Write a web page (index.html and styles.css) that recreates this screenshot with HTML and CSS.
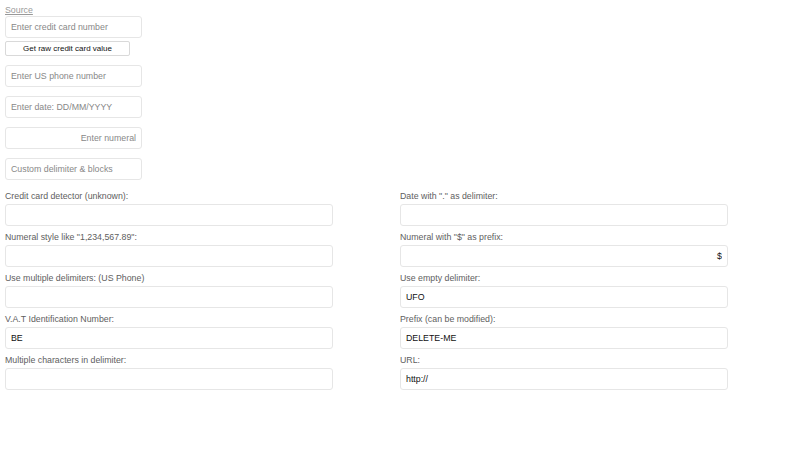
FILE: index.html
```html
<!DOCTYPE html>
<html>
<head>
<meta charset="utf-8">
<link rel="stylesheet" href="styles.css">
</head>
<body>
<a class="source" href="#">Source</a>
<div class="stack">
  <input class="field small" type="text" placeholder="Enter credit card number">
  <button class="btn" type="button">Get raw credit card value</button>
  <input class="field small gap" type="text" placeholder="Enter US phone number">
  <input class="field small gap" type="text" placeholder="Enter date: DD/MM/YYYY">
  <input class="field small gap right" type="text" placeholder="Enter numeral">
  <input class="field small gap" type="text" placeholder="Custom delimiter &amp; blocks">
</div>
<div class="grid">
  <div class="cell"><label>Credit card detector (unknown):</label><input class="field wide" type="text"></div>
  <div class="cell"><label>Date with "." as delimiter:</label><input class="field wide" type="text"></div>
  <div class="cell"><label>Numeral style like "1,234,567.89":</label><input class="field wide" type="text"></div>
  <div class="cell"><label>Numeral with "$" as prefix:</label><input class="field wide right" type="text" value="$"></div>
  <div class="cell"><label>Use multiple delimiters: (US Phone)</label><input class="field wide" type="text"></div>
  <div class="cell"><label>Use empty delimiter:</label><input class="field wide" type="text" value="UFO"></div>
  <div class="cell"><label>V.A.T Identification Number:</label><input class="field wide" type="text" value="BE"></div>
  <div class="cell"><label>Prefix (can be modified):</label><input class="field wide" type="text" value="DELETE-ME"></div>
  <div class="cell"><label>Multiple characters in delimiter:</label><input class="field wide" type="text"></div>
  <div class="cell"><label>URL:</label><input class="field wide" type="text" value="http://"></div>
</div>
</body>
</html>
```
FILE: styles.css
```css
html, body {
  margin: 0;
  background: #fff;
}
body {
  padding: 5px;
  font-family: "Liberation Sans", Arial, sans-serif;
  font-size: 8.8px;
  color: #333;
}
.source {
  display: block;
  height: 11px;
  line-height: 11px;
  font-size: 8.8px;
  color: #999;
  text-decoration: underline;
}
.stack {
  display: flex;
  flex-direction: column;
  align-items: flex-start;
}
.field {
  box-sizing: border-box;
  height: 22px;
  border: 1px solid #e6e6e6;
  border-radius: 3px;
  padding: 0 5px;
  font-family: "Liberation Sans", Arial, sans-serif;
  font-size: 8.8px;
  color: #111;
  background: #fff;
  outline: none;
  margin: 0;
}
.field::placeholder {
  color: #888;
}
.small {
  width: 137px;
}
.gap {
  margin-top: 9px;
}
.right {
  text-align: right;
}
.btn {
  margin-top: 3px;
  width: 125px;
  height: 15px;
  padding: 0;
  box-sizing: border-box;
  border: 1px solid #d9d9d9;
  border-radius: 2px;
  background: #fff;
  font-family: "Liberation Sans", Arial, sans-serif;
  font-size: 8px;
  line-height: 13px;
  color: #111;
  margin-bottom: 0;
}
.grid {
  display: grid;
  grid-template-columns: 395px 395px;
  margin-top: 10px;
}
.cell {
  display: flex;
  flex-direction: column;
  align-items: flex-start;
  padding-bottom: 5px;
}
.cell label {
  display: block;
  height: 13px;
  line-height: 13px;
  margin-bottom: 1px;
  color: #5e5e5e;
  font-size: 8.8px;
}
.wide {
  width: 328px;
}
```
